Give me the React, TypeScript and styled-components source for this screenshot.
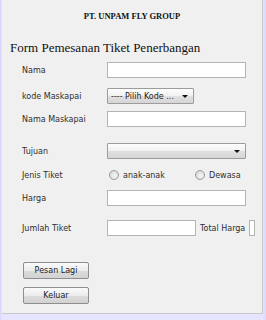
import React from "react";
import styled, { createGlobalStyle } from "styled-components";

const Global = createGlobalStyle`
  html, body { margin: 0; padding: 0; }
  body { background: #dedcff; }
`;

const Frame = styled.div`
  width: 266px;
  height: 320px;
  box-sizing: border-box;
  padding: 0 3px 6px 2px;
  background: linear-gradient(90deg, #d4d2ff 0px, #e6e5ff 2px, #e6e5ff 263px, #d8d6ff 266px);
`;

const Panel = styled.div`
  height: 100%;
  box-sizing: border-box;
  background: #f0f0f0;
  border-right: 1px solid #c9c9c9;
  border-bottom: 1px solid #c9c9c9;
  padding: 10px 0 0 20px;
  font-family: "DejaVu Sans", Tahoma, sans-serif;
  font-size: 8px;
  color: #2e2e2e;
`;

const Company = styled.div`
  font-family: "Liberation Serif", "Times New Roman", serif;
  font-weight: bold;
  font-size: 8.5px;
  line-height: 12px;
  text-align: center;
  margin-left: -20px;
  color: #111;
`;

const Heading = styled.div`
  font-family: "Liberation Serif", "Times New Roman", serif;
  font-size: 13px;
  line-height: 16px;
  margin: 18px 0 0 -12px;
  color: #111;
`;

const Row = styled.div<{ $gap: number }>`
  display: flex;
  align-items: center;
  height: 16px;
  margin-top: ${({ $gap }) => $gap}px;
`;

const Label = styled.div`
  width: 85px;
  flex-shrink: 0;
  white-space: nowrap;
`;

const TextBox = styled.div<{ $w: number }>`
  width: ${({ $w }) => $w}px;
  height: 16px;
  box-sizing: border-box;
  background: #fff;
  border: 1px solid #b4b4b4;
`;

const Select = styled.div<{ $w: number }>`
  width: ${({ $w }) => $w}px;
  height: 16px;
  box-sizing: border-box;
  border: 1px solid #9c9c9c;
  border-radius: 1px;
  background: linear-gradient(#fdfdfd, #f1f1f1 50%, #e0e0e0 51%, #d6d6d6);
  display: flex;
  align-items: center;
  justify-content: space-between;
  padding: 0 5px 0 3px;
  white-space: nowrap;
  color: #222;
`;

const Arrow = styled.span`
  width: 0;
  height: 0;
  border-left: 3px solid transparent;
  border-right: 3px solid transparent;
  border-top: 3px solid #111;
`;

const RadioGroup = styled.div<{ $w: number }>`
  display: flex;
  align-items: center;
  width: ${({ $w }) => $w}px;
  gap: 4px;
`;

const Radio = styled.span`
  width: 10px;
  height: 10px;
  border-radius: 50%;
  box-sizing: border-box;
  border: 1px solid #9a9a9a;
  background: radial-gradient(circle at 60% 60%, #f7f7f7, #cfcfcf);
  margin-left: 2px;
`;

const Inline = styled.span`
  margin: 0 4px;
  white-space: nowrap;
`;

const Buttons = styled.div`
  display: flex;
  flex-direction: column;
  gap: 8px;
  margin: 26px 0 0 1px;
`;

const Button = styled.div`
  width: 66px;
  height: 17px;
  box-sizing: border-box;
  border: 1px solid #8e8e8e;
  border-radius: 2px;
  background: linear-gradient(#fafafa, #ececec 50%, #dcdcdc 51%, #d2d2d2);
  display: flex;
  align-items: center;
  justify-content: center;
  color: #222;
`;

export default function App() {
  return (
    <>
      <Global />
      <Frame>
        <Panel>
          <Company>PT. UNPAM FLY GROUP</Company>
          <Heading>Form Pemesanan Tiket Penerbangan</Heading>
          <Row $gap={6}>
            <Label>Nama</Label>
            <TextBox $w={139} />
          </Row>
          <Row $gap={10}>
            <Label>kode Maskapai</Label>
            <Select $w={87}>
              <span>---- Pilih Kode ...</span>
              <Arrow />
            </Select>
          </Row>
          <Row $gap={7}>
            <Label>Nama Maskapai</Label>
            <TextBox $w={139} />
          </Row>
          <Row $gap={16}>
            <Label>Tujuan</Label>
            <Select $w={139}>
              <span />
              <Arrow />
            </Select>
          </Row>
          <Row $gap={8}>
            <Label>Jenis Tiket</Label>
            <RadioGroup $w={86}>
              <Radio />
              <span>anak-anak</span>
            </RadioGroup>
            <RadioGroup $w={50}>
              <Radio />
              <span>Dewasa</span>
            </RadioGroup>
          </Row>
          <Row $gap={7}>
            <Label>Harga</Label>
            <TextBox $w={139} />
          </Row>
          <Row $gap={14}>
            <Label>Jumlah Tiket</Label>
            <TextBox $w={89} />
            <Inline>Total Harga</Inline>
            <TextBox $w={6} />
          </Row>
          <Buttons>
            <Button>Pesan Lagi</Button>
            <Button>Keluar</Button>
          </Buttons>
        </Panel>
      </Frame>
    </>
  );
}
